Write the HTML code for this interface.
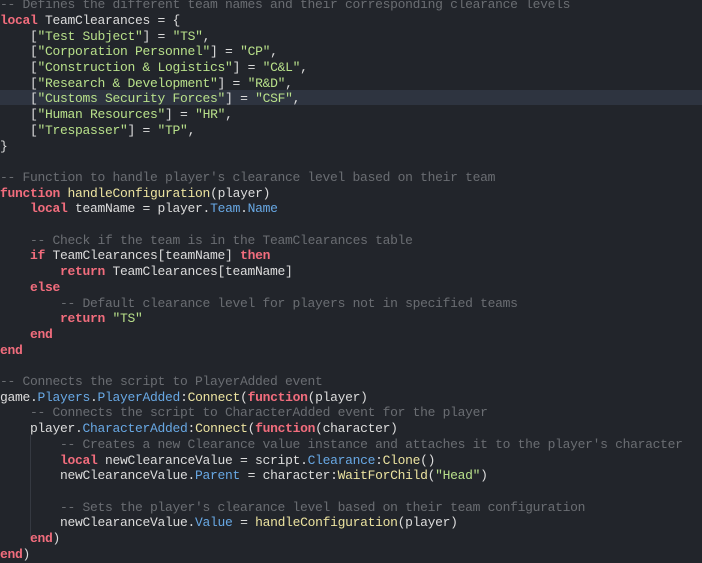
<!DOCTYPE html>
<html><head><meta charset="utf-8"><style>
html,body{margin:0;padding:0;width:702px;height:562px;overflow:hidden;background:#22252b;}
pre{margin:0;position:absolute;top:-2.8px;left:0;font-family:"Liberation Mono","DejaVu Sans Mono",monospace;font-size:13px;letter-spacing:-0.3px;line-height:15.7px;color:#dcdcdc;white-space:pre;}
.hl{position:absolute;left:0;width:702px;top:89.5px;height:15.7px;background:#2e3440;}
.k{color:#f26d7d;font-weight:bold}
.s{color:#b8e08a}
.c{color:#6a6d72}
.f{color:#ece3a0}
.p{color:#68a8e4}
.g{position:absolute;width:1px;background:#353941;}
</style></head><body>
<div class="hl"></div>
<div class="g" style="left:30px;top:435px;height:103px"></div>
<pre><span class="c">-- Defines the different team names and their corresponding clearance levels</span>
<span class="k">local</span> TeamClearances = {
    [<span class="s">"Test Subject"</span>] = <span class="s">"TS"</span>,
    [<span class="s">"Corporation Personnel"</span>] = <span class="s">"CP"</span>,
    [<span class="s">"Construction &amp; Logistics"</span>] = <span class="s">"C&amp;L"</span>,
    [<span class="s">"Research &amp; Development"</span>] = <span class="s">"R&amp;D"</span>,
    [<span class="s">"Customs Security Forces"</span>] = <span class="s">"CSF"</span>,
    [<span class="s">"Human Resources"</span>] = <span class="s">"HR"</span>,
    [<span class="s">"Trespasser"</span>] = <span class="s">"TP"</span>,
}

<span class="c">-- Function to handle player's clearance level based on their team</span>
<span class="k">function</span> <span class="f">handleConfiguration</span>(player)
    <span class="k">local</span> teamName = player.<span class="p">Team</span>.<span class="p">Name</span>

    <span class="c">-- Check if the team is in the TeamClearances table</span>
    <span class="k">if</span> TeamClearances[teamName] <span class="k">then</span>
        <span class="k">return</span> TeamClearances[teamName]
    <span class="k">else</span>
        <span class="c">-- Default clearance level for players not in specified teams</span>
        <span class="k">return</span> <span class="s">"TS"</span>
    <span class="k">end</span>
<span class="k">end</span>

<span class="c">-- Connects the script to PlayerAdded event</span>
game.<span class="p">Players</span>.<span class="p">PlayerAdded</span>:<span class="f">Connect</span>(<span class="k">function</span>(player)
    <span class="c">-- Connects the script to CharacterAdded event for the player</span>
    player.<span class="p">CharacterAdded</span>:<span class="f">Connect</span>(<span class="k">function</span>(character)
        <span class="c">-- Creates a new Clearance value instance and attaches it to the player's character</span>
        <span class="k">local</span> newClearanceValue = script.<span class="p">Clearance</span>:<span class="f">Clone</span>()
        newClearanceValue.<span class="p">Parent</span> = character:<span class="f">WaitForChild</span>(<span class="s">"Head"</span>)

        <span class="c">-- Sets the player's clearance level based on their team configuration</span>
        newClearanceValue.<span class="p">Value</span> = <span class="f">handleConfiguration</span>(player)
    <span class="k">end</span>)
<span class="k">end</span>)</pre>
</body></html>
